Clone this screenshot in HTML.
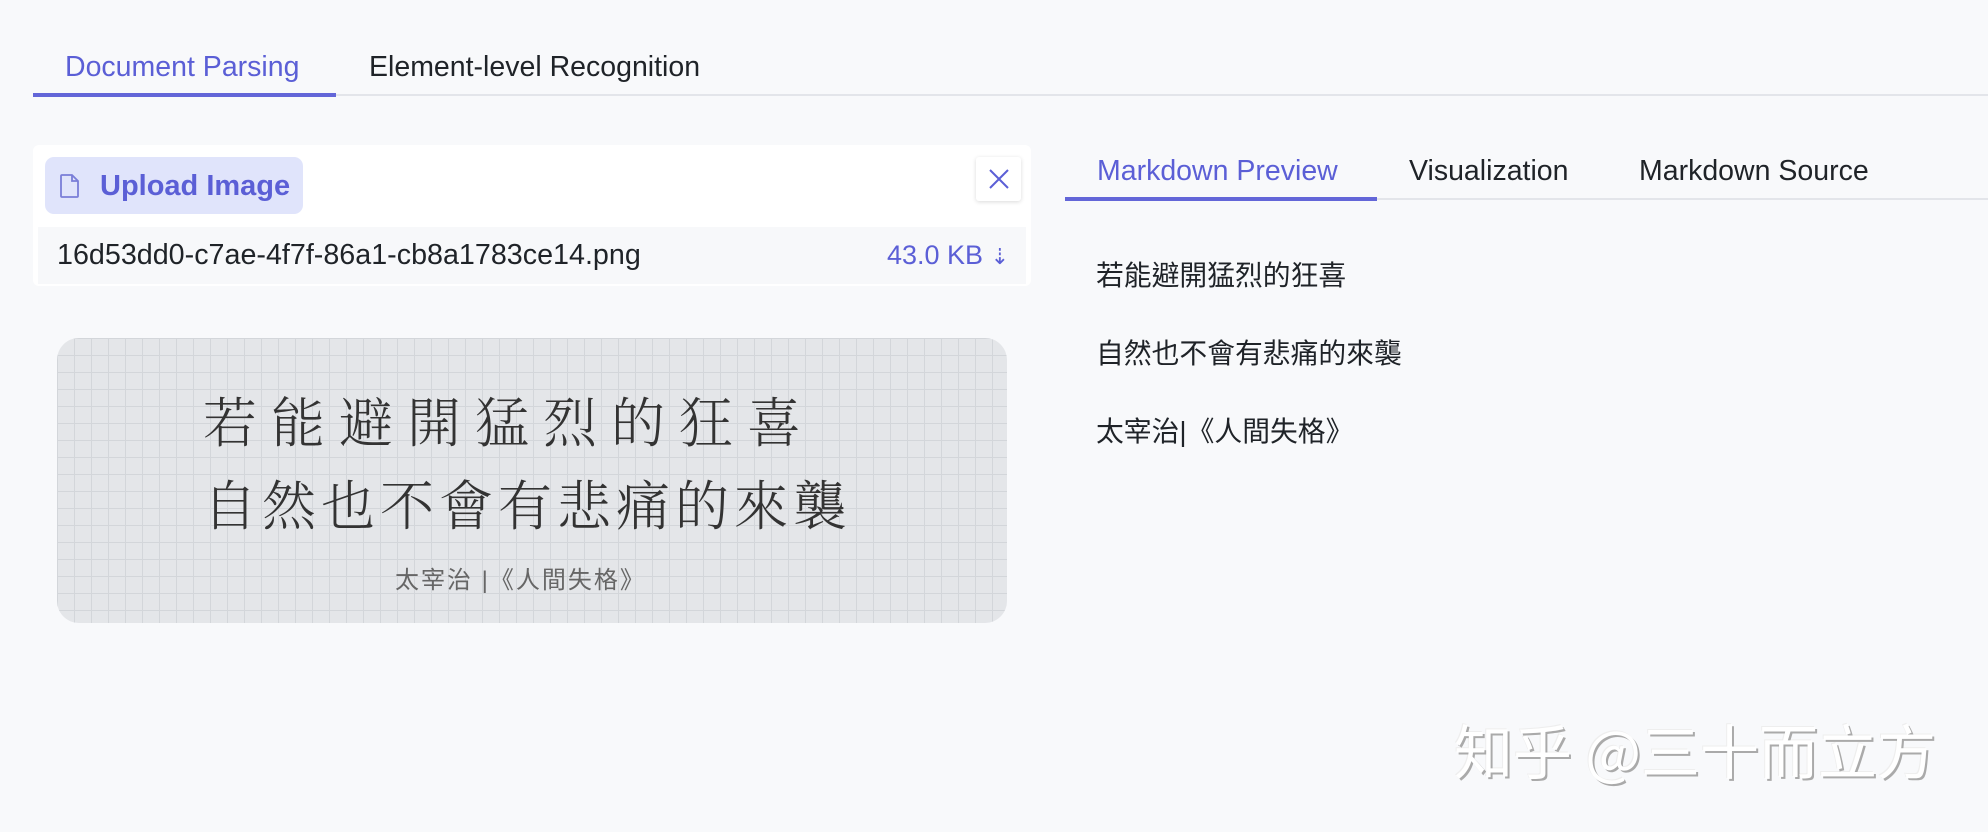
<!DOCTYPE html>
<html><head><meta charset="utf-8"><style>
body{margin:0;width:1988px;height:832px;background:#f8f9fb;font-family:"Liberation Sans","Noto Sans CJK SC",sans-serif;position:relative;overflow:hidden;color:#1f2328}
.a{position:absolute;white-space:nowrap}
.grid{position:absolute;left:57px;top:338px;width:950px;height:285px;border-radius:22px;background-color:#e4e6e9;
background-image:linear-gradient(#d3d6da 1px,transparent 1px),linear-gradient(90deg,#d3d6da 1px,transparent 1px);background-size:17px 17px;overflow:hidden}
.hw{font-family:"Noto Serif CJK SC",serif;color:#333;font-size:54px;font-weight:300}
</style></head><body>
<div class="a" style="left:65px;top:51px;font-size:28.5px;color:#5b5fd6">Document Parsing</div>
<div class="a" style="left:369px;top:51px;font-size:28.5px">Element-level Recognition</div>
<div class="a" style="left:33px;top:94px;width:1955px;height:2px;background:#e3e5ea"></div>
<div class="a" style="left:33px;top:93px;width:303px;height:4px;background:#6366d8"></div>

<div class="a" style="left:33px;top:145px;width:998px;height:141px;background:#fff;border-radius:6px"></div>
<div class="a" style="left:45px;top:157px;width:258px;height:57px;background:#e0e4fb;border-radius:9px"></div>
<svg class="a" style="left:59px;top:173px" width="22" height="26" viewBox="0 0 22 26"><path d="M3 2h10l6 6v15a1 1 0 0 1-1 1H3a1 1 0 0 1-1-1V3a1 1 0 0 1 1-1zM13 2v6h6" fill="none" stroke="#7a7ed8" stroke-width="1.8"/></svg>
<div class="a" style="left:100px;top:170px;font-size:29px;font-weight:bold;color:#5b5fd6">Upload Image</div>
<div class="a" style="left:976px;top:157px;width:45px;height:44px;background:#fff;box-shadow:0 1px 4px rgba(0,0,0,.15);border-radius:3px"></div>
<svg class="a" style="left:988px;top:168px" width="22" height="22"><path d="M2 2L20 20M20 2L2 20" stroke="#5b5fd6" stroke-width="2"/></svg>
<div class="a" style="left:38px;top:227px;width:988px;height:57px;background:#f7f8fa"></div>
<div class="a" style="left:57px;top:239px;font-size:28.7px">16d53dd0-c7ae-4f7f-86a1-cb8a1783ce14.png</div>
<div class="a" style="left:887px;top:240px;font-size:27px;color:#5b5fd6">43.0 KB <span style="font-size:22px">⇣</span></div>

<div class="grid">
<div class="a hw" style="left:146px;top:43px;letter-spacing:14px">若能避開猛烈的狂喜</div>
<div class="a hw" style="left:146px;top:126px;letter-spacing:5px">自然也不會有悲痛的來襲</div>
<div class="a" style="left:338px;top:222px;font-size:24px;color:#666;letter-spacing:2px;font-family:'Liberation Sans','Noto Sans CJK TC',sans-serif">太宰治 |《人間失格》</div>
</div>

<div class="a" style="left:1097px;top:155px;font-size:28.5px;color:#5b5fd6">Markdown Preview</div>
<div class="a" style="left:1409px;top:155px;font-size:28.5px">Visualization</div>
<div class="a" style="left:1639px;top:155px;font-size:28.5px">Markdown Source</div>
<div class="a" style="left:1065px;top:198px;width:923px;height:2px;background:#e3e5ea"></div>
<div class="a" style="left:1065px;top:197px;width:312px;height:4px;background:#6366d8"></div>

<div class="a" style="left:1096px;top:254px;font-size:27.8px;font-family:'Liberation Sans','Noto Sans CJK TC',sans-serif">若能避開猛烈的狂喜</div>
<div class="a" style="left:1096px;top:332px;font-size:27.8px;font-family:'Liberation Sans','Noto Sans CJK TC',sans-serif">自然也不會有悲痛的來襲</div>
<div class="a" style="left:1096px;top:410px;font-size:27.8px;font-family:'Liberation Sans','Noto Sans CJK TC',sans-serif">太宰治|《人間失格》</div>

<div class="a" style="left:1454px;top:706px;font-size:59px;color:#fff;text-shadow:2px 2px 0 #aaa,-1px -1px 0 #eee;font-family:'Noto Sans CJK SC',sans-serif">知乎 @三十而立方</div>
</body></html>
